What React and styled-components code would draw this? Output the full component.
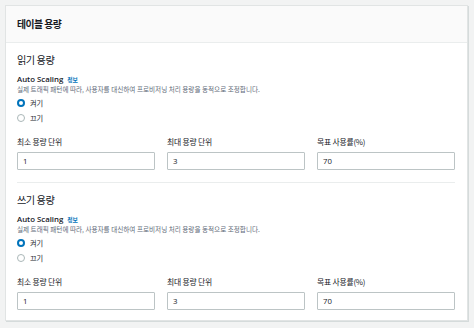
import React from "react";
import styled, { createGlobalStyle } from "styled-components";

const Global = createGlobalStyle`
  html, body { margin: 0; padding: 0; background: #f2f3f3; }
  body {
    font-family: "Open Sans", "Noto Sans CJK KR", sans-serif;
    color: #16191f;
  }
  * { box-sizing: border-box; }
`;

const Page = styled.div`
  width: 474px;
  height: 328px;
  padding: 5px 6px 0 5px;
`;

const Card = styled.div`
  width: 463px;
  background: #ffffff;
  border: 1px solid #e1e4e4;
  box-shadow: 1px 1px 0 #d5dbdb;
  display: flex;
  flex-direction: column;
`;

const Header = styled.div`
  height: 37px;
  background: #fafafa;
  border-bottom: 1px solid #eaeded;
  display: flex;
  align-items: center;
  padding: 0 11px;
`;

const Title = styled.h2`
  margin: 0;
  font-family: "Noto Sans CJK KR", sans-serif;
  font-size: 9.8px;
  font-weight: 700;
  letter-spacing: -0.5px;
  line-height: 12px;
`;

const Body = styled.div`
  padding: 9px 12px 10px 11px;
  display: flex;
  flex-direction: column;
`;

const Section = styled.section`
  display: flex;
  flex-direction: column;
`;

const Heading = styled.h3`
  margin: 0;
  height: 16px;
  font-family: "Noto Sans CJK KR", sans-serif;
  font-size: 10.2px;
  font-weight: 400;
  letter-spacing: -0.5px;
  line-height: 16px;
`;

const FieldTitle = styled.div`
  margin-top: 6px;
  height: 10px;
  line-height: 10px;
  display: flex;
  align-items: baseline;
  gap: 4px;
`;

const FieldName = styled.span`
  font-size: 7.8px;
  font-weight: 600;
`;

const InfoLink = styled.a`
  font-family: "Noto Sans CJK KR", sans-serif;
  font-size: 5.8px;
  font-weight: 700;
  color: #0073bb;
  text-decoration: none;
`;

const Desc = styled.div`
  height: 10px;
  line-height: 10px;
  font-family: "Noto Sans CJK KR", sans-serif;
  font-size: 6.6px;
  color: #5f6b7a;
  white-space: nowrap;
`;

const RadioGroup = styled.div`
  margin-top: 1px;
  display: flex;
  flex-direction: column;
`;

const RadioRow = styled.label`
  height: 15px;
  display: flex;
  align-items: center;
  gap: 5px;
  font-family: "Noto Sans CJK KR", sans-serif;
  font-size: 7.2px;
`;

const RadioDot = styled.span`
  width: 8px;
  height: 8px;
  border-radius: 50%;
  background: #ffffff;
  border: ${(p) => (p.$checked ? "2.4px solid #0073bb" : "1px solid #aab7b8")};
  flex: none;
`;

const Fields = styled.div`
  margin-top: 11px;
  display: grid;
  grid-template-columns: repeat(3, 138px);
  column-gap: 12px;
`;

const Field = styled.div`
  display: flex;
  flex-direction: column;
`;

const Label = styled.div`
  height: 12px;
  line-height: 12px;
  font-family: "Noto Sans CJK KR", sans-serif;
  font-size: 7.8px;
  letter-spacing: -0.2px;
`;

const Input = styled.div`
  margin-top: 4px;
  height: 18px;
  border: 1px solid #bcc4c5;
  border-radius: 1px;
  padding: 0 5px;
  display: flex;
  align-items: center;
  font-size: 7.8px;
`;

const Divider = styled.hr`
  margin: 12px 0 9px;
  border: none;
  border-top: 1px solid #eaeded;
  height: 0;
`;

const sections = [
  { title: "읽기 용량", min: "1", max: "3", target: "70" },
  { title: "쓰기 용량", min: "1", max: "3", target: "70" },
];

function CapacitySection({ title, min, max, target }) {
  return (
    <Section>
      <Heading>{title}</Heading>
      <FieldTitle>
        <FieldName>Auto Scaling</FieldName>
        <InfoLink href="#">정보</InfoLink>
      </FieldTitle>
      <Desc>실제 트래픽 패턴에 따라, 사용자를 대신하여 프로비저닝 처리 용량을 동적으로 조정합니다.</Desc>
      <RadioGroup>
        <RadioRow>
          <RadioDot $checked />
          켜기
        </RadioRow>
        <RadioRow>
          <RadioDot />
          끄기
        </RadioRow>
      </RadioGroup>
      <Fields>
        <Field>
          <Label>최소 용량 단위</Label>
          <Input>{min}</Input>
        </Field>
        <Field>
          <Label>최대 용량 단위</Label>
          <Input>{max}</Input>
        </Field>
        <Field>
          <Label>목표 사용률(%)</Label>
          <Input>{target}</Input>
        </Field>
      </Fields>
    </Section>
  );
}

export default function App() {
  return (
    <>
      <Global />
      <Page>
        <Card>
          <Header>
            <Title>테이블 용량</Title>
          </Header>
          <Body>
            <CapacitySection {...sections[0]} />
            <Divider />
            <CapacitySection {...sections[1]} />
          </Body>
        </Card>
      </Page>
    </>
  );
}
